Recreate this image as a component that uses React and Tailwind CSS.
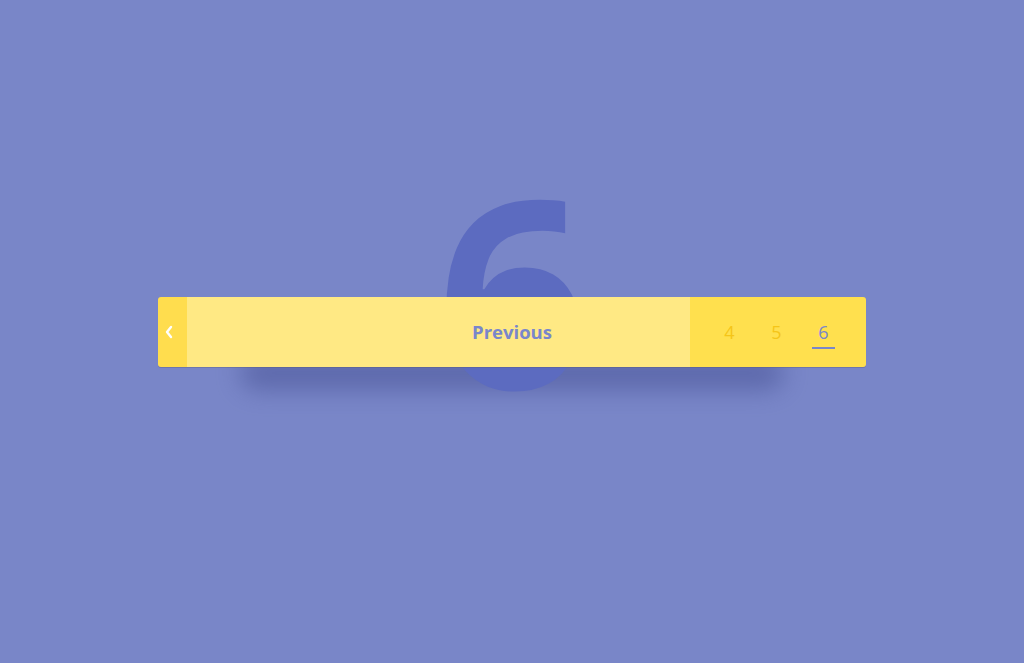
export default function App() {
  return (
    <div className="relative w-full h-[663px] bg-[#7986c8] overflow-hidden" style={{ fontFamily: '"Open Sans", sans-serif' }}>
      {/* soft shadow under the pager */}
      <div className="absolute left-[240px] top-[356px] w-[544px] h-[34px] bg-[#4a5598] opacity-60 blur-[12px] rounded-full" />
      {/* large current page number */}
      <div className="absolute left-0 right-0 top-[157px] flex justify-center">
        <span className="text-[262px] leading-none font-bold text-[#5c6bc0]">6</span>
      </div>
      {/* pager bar */}
      <div className="absolute left-[158px] top-[297px] w-[708px] h-[70px] flex rounded-[3px] overflow-hidden shadow-[0_1px_0_rgba(90,90,120,0.35)]">
        <button className="w-[29px] h-full bg-[#ffdd4e] flex items-center justify-start pl-[6px]">
          <svg width="10" height="14" viewBox="0 0 10 14" fill="none">
            <path d="M7 2 L3 7 L7 12" stroke="#ffffff" strokeWidth="2.4" strokeLinecap="round" strokeLinejoin="round" />
          </svg>
        </button>
        <div className="flex-1 bg-[#ffe984] flex items-center justify-center pl-[147px]">
          <span className="text-[18.5px] font-bold text-[#7986cb]">Previous</span>
        </div>
        <div className="w-[176px] bg-[#ffe04e] flex items-center pl-[28px] gap-[24px]">
          <span className="w-[23px] text-center text-[18px] text-[#f5c518]">4</span>
          <span className="w-[23px] text-center text-[18px] text-[#f5c518]">5</span>
          <span className="relative w-[23px] text-center text-[18px] text-[#7986cb]">
            6
            <span className="absolute left-0 right-0 top-[28px] h-[2px] bg-[#7986cb]" />
          </span>
        </div>
      </div>
    </div>
  );
}
